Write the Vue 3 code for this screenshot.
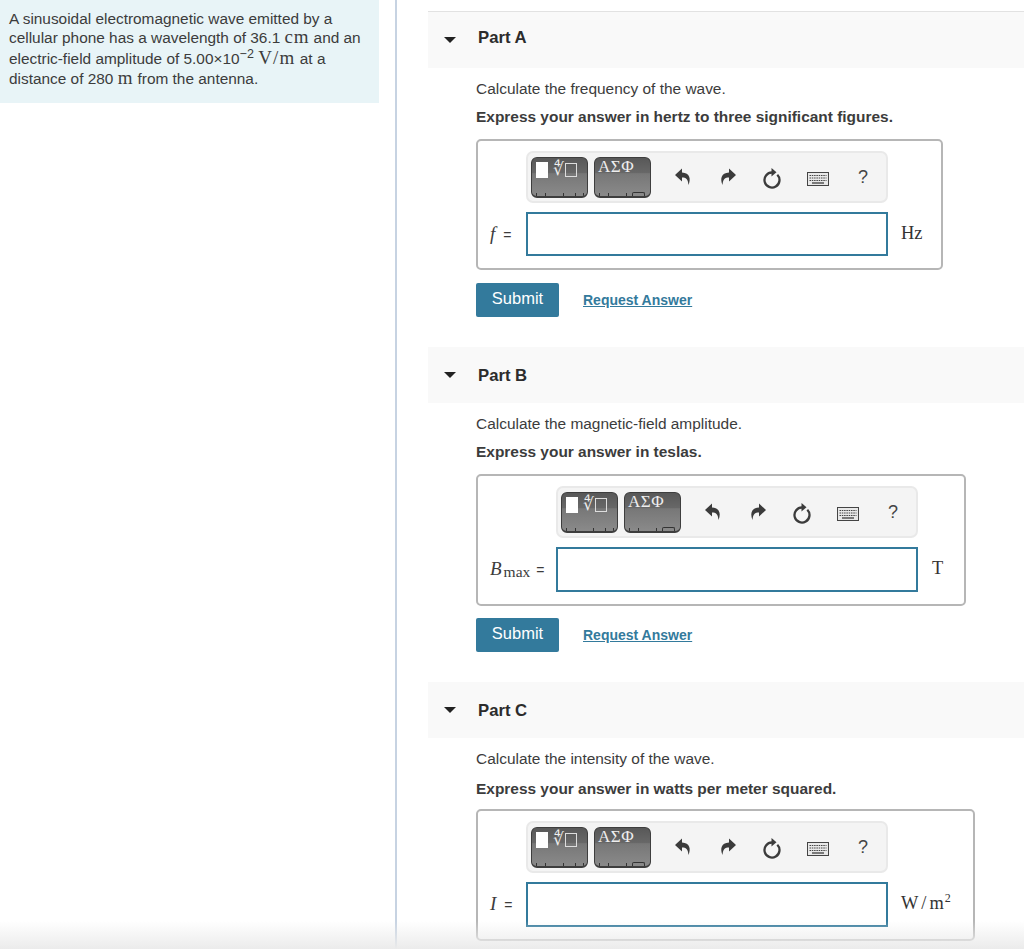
<script setup>
const parts = [
  { name: 'Part A', desc: 'Calculate the frequency of the wave.', instr: 'Express your answer in hertz to three significant figures.', label: 'f', sub: '', unit: 'Hz', sup: '', cls: 'part-a', tall: false },
  { name: 'Part B', desc: 'Calculate the magnetic-field amplitude.', instr: 'Express your answer in teslas.', label: 'B', sub: 'max', unit: 'T', sup: '', cls: 'part-b', tall: true },
  { name: 'Part C', desc: 'Calculate the intensity of the wave.', instr: 'Express your answer in watts per meter squared.', label: 'I', sub: '', unit: 'W/m', sup: '2', cls: 'part-c', tall: true }
]
const ticks = [4, 13, 31, 43, 51]
</script>

<template>
  <div class="page">
    <aside class="intro">
      <p>A sinusoidal electromagnetic wave emitted by a cellular phone has a wavelength of 36.1 <span class="m">cm</span> and an electric-field amplitude of 5.00×10<sup>−2</sup> <span class="m big">V/m</span> at a distance of 280 <span class="m">m</span> from the antenna.</p>
    </aside>
    <div class="divider"></div>
    <main class="parts">
      <section v-for="p in parts" :key="p.name" class="part" :class="p.cls">
        <header class="head">
          <span class="caret"></span>
          <h2>{{ p.name }}</h2>
        </header>
        <div class="body">
          <p class="desc">{{ p.desc }}</p>
          <p class="instr">{{ p.instr }}</p>
          <div class="box" :class="{ tall: p.tall }">
            <div class="label"><i>{{ p.label }}</i><span v-if="p.sub" class="lsub">{{ p.sub }}</span><span class="eq">=</span></div>
            <div class="main">
              <div class="toolbar">
                <div class="tbtn first">
                  <span class="sq"></span><span class="rad">∜</span><span class="hollow"></span>
                  <b v-for="t in ticks" :key="t" class="tick" :style="{ left: t + 'px' }"></b>
                </div>
                <div class="tbtn second">
                  <span class="greek">ΑΣΦ</span>
                  <b v-for="t in ticks.slice(0, 3)" :key="t" class="tick" :style="{ left: t + 'px' }"></b>
                  <b class="tab"></b>
                </div>
                <svg class="ic undo" viewBox="0 0 18 20" width="18" height="20"><path d="M8 1.500 1 8l7 6.500v-4c4 0 6 1.500 6.500 7.500 2.500-6 1.500-12-6.500-12.500z" fill="#3b3b3b"/></svg>
                <svg class="ic redo" viewBox="0 0 18 20" width="18" height="20"><path d="M10 1.500 17 8l-7 6.500v-4c-4 0-6 1.500-6.500 7.500C1 12 2 6 10 5.500z" fill="#3b3b3b"/></svg>
                <svg class="ic reset" viewBox="0 0 20 22" width="20" height="22"><path d="M10 5.500a7.500 7.500 0 1 0 5.300 2.200" fill="none" stroke="#3b3b3b" stroke-width="2.300"/><path d="M9.500 1 14.500 5.300 9.500 9.500z" fill="#3b3b3b"/></svg>
                <svg class="ic kbd" viewBox="0 0 22 14" width="22" height="14">
                  <rect x=".5" y=".5" width="21" height="13" fill="#e8e8e8" stroke="#444"/>
                  <path d="M2.500 3.500h17M2.500 6h17M2.500 8.500h17" stroke="#444" stroke-width="1.200" stroke-dasharray="1.500 .8"/>
                  <path d="M5 11h12" stroke="#555" stroke-width="1.500"/>
                </svg>
                <span class="help">?</span>
              </div>
              <input class="answer" type="text" />
            </div>
            <div class="unit">{{ p.unit }}<sup v-if="p.sup">{{ p.sup }}</sup></div>
          </div>
          <div class="actions">
            <button class="submit" type="button">Submit</button>
            <a class="req" href="#">Request Answer</a>
          </div>
        </div>
      </section>
    </main>
    <div class="fade"></div>
  </div>
</template>

<style scoped>
.page {
  position: relative;
  display: flex;
  align-items: flex-start;
  width: 1024px;
  height: 949px;
  overflow: hidden;
  background: #fff;
  font-family: "Liberation Sans", Arial, sans-serif;
  color: #3c3c3c;
}
.intro {
  flex: none;
  box-sizing: border-box;
  width: 379px;
  height: 103px;
  padding: 10px 9px;
  background: #e8f4f7;
}
.intro p {
  margin: 0;
  font-size: 15.400px;
  line-height: 18.500px;
}
.intro sup {
  font-size: 12.500px;
  line-height: 0;
  vertical-align: 6px;
}
.m {
  font-family: "Liberation Serif", serif;
  font-size: 19px;
  line-height: 0;
  letter-spacing: 0.800px;
}
.big {
  font-size: 19px;
  line-height: 22.500px;
  letter-spacing: 1.200px;
}
.divider {
  flex: none;
  width: 2px;
  height: 949px;
  margin-left: 16px;
  background: #c7d3e2;
}
.parts {
  flex: 1;
  min-width: 0;
  margin-left: 31px;
  padding-top: 11px;
}
.part-a .head {
  border-top: 1px solid #e2e2e2;
}
.head {
  display: flex;
  align-items: center;
  height: 56px;
  background: #f9f9f9;
  padding-left: 16px;
}
.caret {
  width: 0;
  height: 0;
  border-left: 6.500px solid transparent;
  border-right: 6.500px solid transparent;
  border-top: 6.500px solid #222;
}
.head h2 {
  margin: 0 0 0 22px;
  padding-top: 1px;
  font-size: 16.700px;
  font-weight: 700;
  color: #2c2c2c;
}
.part-a .head h2 {
  padding: 0 0 4px;
}
.body {
  padding: 11px 0 30px 48px;
}
.desc, .instr {
  margin: 0;
  font-size: 15.440px;
  line-height: 20px;
}
.instr {
  margin-top: 8px;
  margin-bottom: 12px;
  font-weight: 700;
}
.part-c .instr {
  margin-top: 10px;
  margin-bottom: 10px;
}
.box {
  display: inline-flex;
  box-sizing: border-box;
  height: 131px;
  padding-top: 10px;
  border: 2px solid #b6b6b6;
  border-radius: 5px;
  vertical-align: top;
}
.box.tall {
  height: 132px;
}
.label {
  flex: none;
  display: flex;
  align-items: baseline;
  box-sizing: border-box;
  width: 48px;
  height: 44px;
  margin-top: 61px;
  padding-left: 12px;
  line-height: 44px;
  font-family: "Liberation Serif", serif;
  font-size: 19px;
  white-space: nowrap;
}
.label i {
  padding-right: 2px;
}
.part-b .label {
  width: 78px;
}
.label .eq {
  margin-left: 6px;
  font-family: "Liberation Sans", sans-serif;
  font-size: 14px;
}
.lsub {
  position: relative;
  top: 2px;
  font-size: 15.500px;
}
.main {
  flex: none;
  width: 362px;
  display: flex;
  flex-direction: column;
  gap: 9px;
}
.toolbar {
  box-sizing: border-box;
  height: 52px;
  display: flex;
  align-items: center;
  padding-left: 3px;
  background: #f4f4f4;
  border: 2px solid #e9e9e9;
  border-radius: 7px;
}
.tbtn {
  position: relative;
  box-sizing: border-box;
  flex: none;
  display: flex;
  align-items: flex-start;
  width: 57px;
  height: 41px;
  margin-right: 6px;
  overflow: hidden;
  border: 1px solid #3e3e3e;
  border-bottom-width: 2px;
  border-radius: 6px;
  background: linear-gradient(#585858 0, #686868 40%, #777 41%, #8a8a8a 100%);
  color: #eee;
}
.sq {
  flex: none;
  width: 12px;
  height: 16px;
  margin: 4px 0 0 4px;
  background: #fff;
}
.rad {
  margin-left: 5px;
  font-family: "DejaVu Sans", sans-serif;
  font-size: 17px;
  line-height: 22px;
}
.hollow {
  flex: none;
  box-sizing: border-box;
  width: 12px;
  height: 14px;
  margin: 5px 0 0 1px;
  border: 1px solid #ddd;
}
.greek {
  margin-left: 3px;
  font-family: "Liberation Serif", serif;
  font-size: 17px;
  line-height: 17px;
  letter-spacing: 0.500px;
}
.tick {
  position: absolute;
  bottom: 0;
  width: 1px;
  height: 3px;
  background: #333;
}
.tab {
  position: absolute;
  right: 5px;
  bottom: 0;
  box-sizing: border-box;
  width: 13px;
  height: 4px;
  border: 1px solid #333;
  border-bottom: 0;
  border-radius: 2px 2px 0 0;
}
.ic {
  flex: none;
}
.undo { margin-left: 17px; }
.redo { margin-left: 27px; }
.reset { margin-left: 25px; margin-top: 2px; }
.kbd { margin-left: 25px; margin-top: 3px; }
.help {
  margin-left: 29px;
  font-size: 18px;
  color: #444;
}
.answer {
  box-sizing: border-box;
  display: block;
  width: 362px;
  height: 44px;
  padding: 0;
  background: #fff;
  border: 2px solid #337a9c;
  border-radius: 0;
  outline: none;
}
.tall .answer {
  height: 45px;
}
.unit {
  flex: none;
  align-self: flex-start;
  box-sizing: border-box;
  width: 53px;
  height: 44px;
  margin-top: 61px;
  padding-left: 13px;
  line-height: 42px;
  font-family: "Liberation Serif", serif;
  font-size: 18.400px;
  color: #333;
  white-space: nowrap;
}
.part-b .unit {
  width: 46px;
  padding-left: 14px;
}
.part-c .unit {
  width: 85px;
  letter-spacing: 3px;
}
.unit sup {
  font-size: 12px;
  line-height: 0;
  letter-spacing: 0;
  margin-left: -2px;
}
.actions {
  display: flex;
  align-items: center;
  gap: 24px;
  margin-top: 13px;
}
.part-b .actions {
  margin-top: 12px;
}
.submit {
  box-sizing: border-box;
  width: 83px;
  height: 34px;
  padding: 0 0 3px;
  border: 0;
  border-radius: 2px;
  background: #337a9c;
  color: #fff;
  font-family: "Liberation Sans", sans-serif;
  font-size: 16.500px;
}
.req {
  font-size: 14px;
  font-weight: 700;
  color: #337a9c;
  text-decoration: underline;
}
.fade {
  position: absolute;
  left: 0;
  right: 0;
  bottom: 0;
  height: 28px;
  background: linear-gradient(rgba(235, 235, 235, 0), #ebebeb);
  pointer-events: none;
}
</style>
